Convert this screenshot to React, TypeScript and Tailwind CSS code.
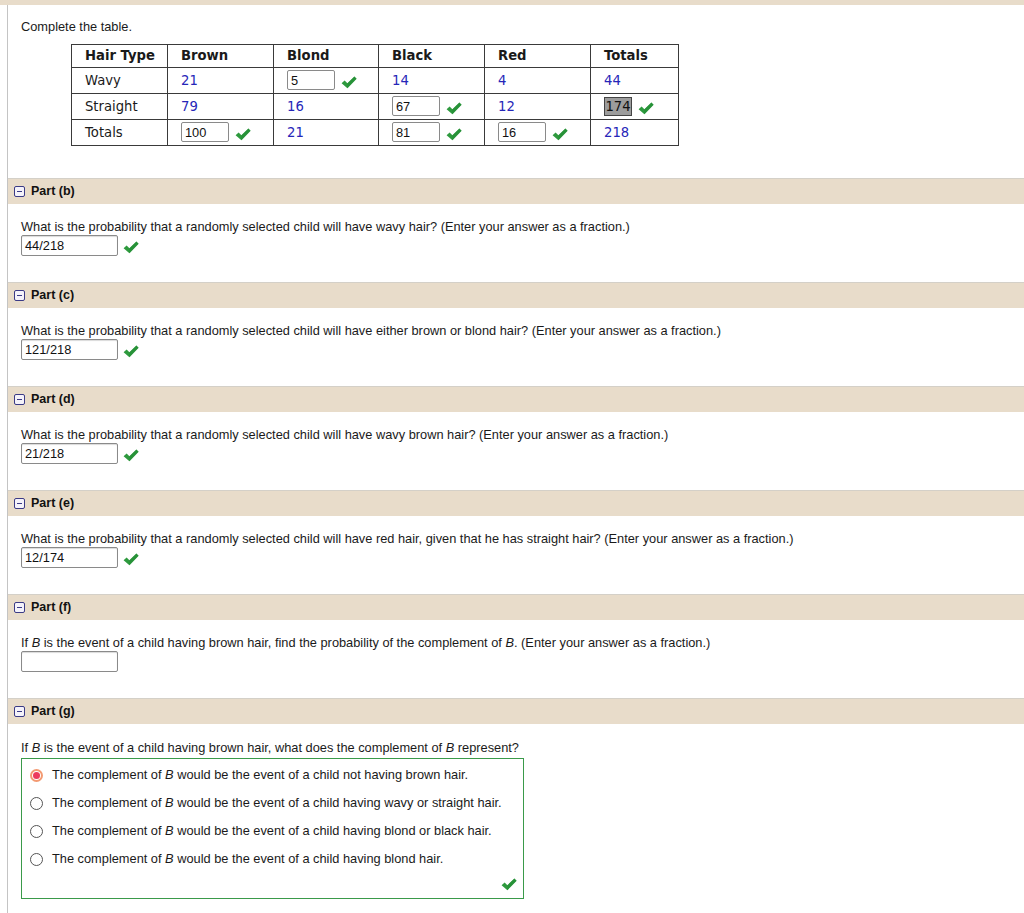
import React from "react";

const Check: React.FC<{ className?: string }> = ({ className }) => (
  <svg width="16" height="13" viewBox="0 0 16 13" className={className}>
    <path d="M0.6 7.2 L3.6 4.4 L6.4 7.2 L13.4 0.4 L15.6 2.8 L6.4 12.2 Z" fill="#2e9a3e" />
    <path d="M6.4 7.2 L13.4 0.4 L15.6 2.8 L6.4 12.2 Z" fill="#1f8a32" opacity="0.5" />
  </svg>
);

const MinusBox: React.FC = () => (
  <span className="inline-flex h-[11px] w-[11px] items-center justify-center rounded-[2px] border-[1.5px] border-[#3b3b86] bg-[#f4f2fa]">
    <span className="block h-[1.5px] w-[5px] bg-[#3b3b86]" />
  </span>
);

const PartHeader: React.FC<{ label: string }> = ({ label }) => (
  <div className="flex h-[26px] items-center gap-[6px] border-t border-[#d4d0c8] bg-[#e8dcca] pl-[6px] text-[12.5px] font-bold text-[#111]">
    <MinusBox />
    <span>{label}</span>
  </div>
);

const AnswerBox: React.FC<{ value?: string }> = ({ value }) => (
  <div className="flex items-center gap-[5px]">
    <div className="flex h-[21px] w-[97px] items-center rounded-[2px] border border-[#8a8a8a] px-[3px] text-[12.8px] text-[#111] shadow-[inset_0_1px_1px_rgba(0,0,0,0.15)]">
      {value}
    </div>
    {value && <Check className="mt-[4px]" />}
  </div>
);

const Part: React.FC<{ label: string; question: React.ReactNode; answer?: string }> = ({ label, question, answer }) => (
  <div>
    <PartHeader label={label} />
    <div className="h-[78px] pl-[13px] pt-[15px]">
      <div className="h-[15px] text-[12.8px] leading-[15px]">{question}</div>
      <div className="mt-[1px]">
        <AnswerBox value={answer} />
      </div>
    </div>
  </div>
);

const CellInput: React.FC<{ value: string }> = ({ value }) => (
  <span className="inline-flex items-center gap-[6px]">
    <span className="inline-flex h-[20px] w-[48px] items-center rounded-[2px] border border-[#8a8a8a] px-[3px] font-['Liberation_Sans',Arial,sans-serif] text-[12.8px] text-[#111]">
      {value}
    </span>
    <Check className="mt-[5px]" />
  </span>
);

const Num: React.FC<{ v: string }> = ({ v }) => <span className="text-[#2626b8]">{v}</span>;

export default function App() {
  const td = "border border-[#3a3a3a] pl-[13px] align-middle";
  return (
    <div className="min-h-[913px] w-[1024px] bg-white font-['Liberation_Sans',Arial,sans-serif] text-[#1a1a1a]">
      <div className="h-[5px] bg-[#e8dcca]" />
      <div className="ml-[7px] min-h-[908px] border-l border-[#c4c4c4]">
        <div className="pl-[13px] pt-[15px] text-[12.8px] leading-[14px]">Complete the table.</div>
        <div className="mt-[10px] pl-[63px]">
          <table className="border-collapse font-['DejaVu_Sans',Verdana,sans-serif] text-[13.2px] text-[#1a1a1a]">
            <colgroup>
              <col className="w-[96px]" />
              <col className="w-[106px]" />
              <col className="w-[105px]" />
              <col className="w-[106px]" />
              <col className="w-[106px]" />
              <col className="w-[88px]" />
            </colgroup>
            <tbody>
              <tr className="h-[23px] font-bold">
                <td className={td}>Hair Type</td>
                <td className={td}>Brown</td>
                <td className={td}>Blond</td>
                <td className={td}>Black</td>
                <td className={td}>Red</td>
                <td className={td}>Totals</td>
              </tr>
              <tr className="h-[26px]">
                <td className={td}>Wavy</td>
                <td className={td}><Num v="21" /></td>
                <td className={td}><CellInput value="5" /></td>
                <td className={td}><Num v="14" /></td>
                <td className={td}><Num v="4" /></td>
                <td className={td}><Num v="44" /></td>
              </tr>
              <tr className="h-[26px]">
                <td className={td}>Straight</td>
                <td className={td}><Num v="79" /></td>
                <td className={td}><Num v="16" /></td>
                <td className={td}><CellInput value="67" /></td>
                <td className={td}><Num v="12" /></td>
                <td className={td}>
                  <span className="inline-flex items-center gap-[6px]">
                    <span className="inline-flex h-[19px] w-[28px] items-center justify-center border border-[#444] bg-[#9c9c9c] text-[#111]">174</span>
                    <Check className="mt-[5px]" />
                  </span>
                </td>
              </tr>
              <tr className="h-[26px]">
                <td className={td}>Totals</td>
                <td className={td}><CellInput value="100" /></td>
                <td className={td}><Num v="21" /></td>
                <td className={td}><CellInput value="81" /></td>
                <td className={td}><CellInput value="16" /></td>
                <td className={td}><Num v="218" /></td>
              </tr>
            </tbody>
          </table>
        </div>
        <div className="mt-[32px]">
          <Part
            label="Part (b)"
            question="What is the probability that a randomly selected child will have wavy hair? (Enter your answer as a fraction.)"
            answer="44/218"
          />
          <Part
            label="Part (c)"
            question="What is the probability that a randomly selected child will have either brown or blond hair? (Enter your answer as a fraction.)"
            answer="121/218"
          />
          <Part
            label="Part (d)"
            question="What is the probability that a randomly selected child will have wavy brown hair? (Enter your answer as a fraction.)"
            answer="21/218"
          />
          <Part
            label="Part (e)"
            question="What is the probability that a randomly selected child will have red hair, given that he has straight hair? (Enter your answer as a fraction.)"
            answer="12/174"
          />
          <Part
            label="Part (f)"
            question={
              <>
                If <i>B</i> is the event of a child having brown hair, find the probability of the complement of <i>B</i>. (Enter your answer as a fraction.)
              </>
            }
          />
          <PartHeader label="Part (g)" />
          <div className="pl-[13px] pt-[16px]">
            <div className="text-[12.8px] leading-[15px]">
              If <i>B</i> is the event of a child having brown hair, what does the complement of <i>B</i> represent?
            </div>
            <div className="relative mt-[3px] h-[141px] w-[503px] border border-[#3a9a4a] pt-[2px]">
              {[
                "a child not having brown hair.",
                "a child having wavy or straight hair.",
                "a child having blond or black hair.",
                "a child having blond hair.",
              ].map((t, i) => (
                <div key={i} className="flex h-[28px] items-center gap-[9px] pl-[8px] text-[12.8px]">
                  {i === 0 ? (
                    <span className="inline-flex h-[13px] w-[13px] items-center justify-center rounded-full border-[2px] border-[#f39a72] bg-white">
                      <span className="block h-[7px] w-[7px] rounded-full bg-[#ec3a5e]" />
                    </span>
                  ) : (
                    <span className="inline-block h-[13px] w-[13px] rounded-full border border-[#555] bg-white" />
                  )}
                  <span>
                    The complement of <i>B</i> would be the event of {t}
                  </span>
                </div>
              ))}
              <Check className="absolute bottom-[7px] right-[6px]" />
            </div>
          </div>
        </div>
      </div>
    </div>
  );
}
